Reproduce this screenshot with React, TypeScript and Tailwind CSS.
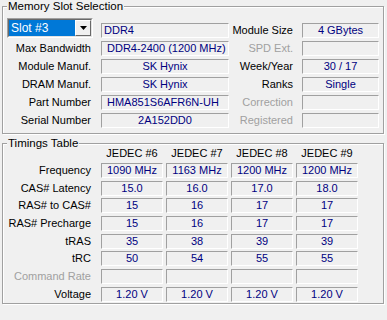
const navy = "text-[#000080]";

type TopRow = {
  label: string;
  value: string;
  left?: boolean;
  rLabel: string;
  rValue: string;
  rDisabled?: boolean;
};

const topRows: TopRow[] = [
  { label: "Max Bandwidth", value: "DDR4-2400 (1200 MHz)", left: true, rLabel: "SPD Ext.", rValue: "", rDisabled: true },
  { label: "Module Manuf.", value: "SK Hynix", rLabel: "Week/Year", rValue: "30 / 17" },
  { label: "DRAM Manuf.", value: "SK Hynix", rLabel: "Ranks", rValue: "Single" },
  { label: "Part Number", value: "HMA851S6AFR6N-UH", left: true, rLabel: "Correction", rValue: "", rDisabled: true },
  { label: "Serial Number", value: "2A152DD0", rLabel: "Registered", rValue: "", rDisabled: true },
];

const timings: { label: string; values: string[]; disabled?: boolean }[] = [
  { label: "Frequency", values: ["1090 MHz", "1163 MHz", "1200 MHz", "1200 MHz"] },
  { label: "CAS# Latency", values: ["15.0", "16.0", "17.0", "18.0"] },
  { label: "RAS# to CAS#", values: ["15", "16", "17", "17"] },
  { label: "RAS# Precharge", values: ["15", "16", "17", "17"] },
  { label: "tRAS", values: ["35", "38", "39", "39"] },
  { label: "tRC", values: ["50", "54", "55", "55"] },
  { label: "Command Rate", values: ["", "", "", ""], disabled: true },
  { label: "Voltage", values: ["1.20 V", "1.20 V", "1.20 V", "1.20 V"] },
];

function Field({ children, className = "" }: { children?: React.ReactNode; className?: string }) {
  return (
    <div
      className={`h-[15px] border border-t-[#a0a0a0] border-l-[#a0a0a0] border-r-white border-b-white leading-[13px] whitespace-nowrap overflow-hidden ${navy} ${className}`}
    >
      {children}
    </div>
  );
}

function Group({ title, className = "", children }: { title: string; className?: string; children: React.ReactNode }) {
  return (
    <div
      className={`relative border border-[#a0a0a0] shadow-[inset_1px_1px_0_#fff,1px_1px_0_#fff] ${className}`}
    >
      <span className="absolute -top-[8px] left-[4px] bg-[#f0f0f0] px-[1px] leading-[14px] text-[11.5px] text-black">
        {title}
      </span>
      {children}
    </div>
  );
}

function SlotCombo() {
  return (
    <div className="ml-[4px] w-[86px] h-[20px] flex border border-t-[#a0a0a0] border-l-[#a0a0a0] border-r-white border-b-white">
      <div className="flex-1 flex bg-white border border-t-[#696969] border-l-[#696969] border-r-[#e3e3e3] border-b-[#e3e3e3]">
        <div className="flex-1 bg-[#0078d7] text-white pl-[2px] leading-[16px] text-[12px]">Slot #3</div>
        <div className="w-[16px] flex items-center justify-center bg-[#f0f0f0] border border-t-white border-l-white border-r-[#696969] border-b-[#696969]">
          <svg width="7" height="4" viewBox="0 0 7 4">
            <path d="M0 0H7L3.5 4Z" fill="#000" />
          </svg>
        </div>
      </div>
    </div>
  );
}

export default function App() {
  return (
    <div className="w-[387px] h-[320px] bg-[#f0f0f0] pt-[6px] pl-[2px] pr-[3px] font-['Liberation_Sans',Arial,sans-serif] text-[11px] text-black">
      <Group title="Memory Slot Selection" className="h-[128px] pt-[11px]">
        <div className="flex flex-col gap-[3px]">
          <div className="flex items-end">
            <SlotCombo />
            <Field className="ml-[8px] w-[128px] pl-[2px]">DDR4</Field>
            <div className="w-[66px] pr-[2px] text-right leading-[15px]">Module Size</div>
            <Field className="ml-[7px] w-[77px] text-center">4 GBytes</Field>
          </div>
          {topRows.map((r) => (
            <div key={r.label} className="flex items-center">
              <div className="w-[89px] pr-[1px] text-right leading-[15px]">{r.label}</div>
              <Field className={`ml-[9px] w-[128px] ${r.left ? "pl-[5px]" : "text-center"}`}>{r.value}</Field>
              <div className={`w-[66px] pr-[2px] text-right leading-[15px] ${r.rDisabled ? "text-[#a0a0a0]" : ""}`}>
                {r.rLabel}
              </div>
              <Field className="ml-[7px] w-[77px] text-center">{r.rValue}</Field>
            </div>
          ))}
        </div>
      </Group>

      <Group title="Timings Table" className="mt-[9px] h-[161px] pt-[2px]">
        <div className="flex flex-col">
          <div className="flex h-[14px] leading-[14px]">
            <div className="w-[89px]" />
            <div className="ml-[9px] grid grid-cols-[62px_62px_62px_62px] gap-x-[3px]">
              {["JEDEC #6", "JEDEC #7", "JEDEC #8", "JEDEC #9"].map((h) => (
                <div key={h} className="text-center">{h}</div>
              ))}
            </div>
          </div>
          <div className="mt-[3px] flex flex-col gap-[2.7px]">
            {timings.map((t) => (
              <div key={t.label} className="flex items-center">
                <div className={`w-[89px] pr-[1px] text-right leading-[15px] ${t.disabled ? "text-[#a0a0a0]" : ""}`}>
                  {t.label}
                </div>
                <div className="ml-[9px] grid grid-cols-[62px_62px_62px_62px] gap-x-[3px]">
                  {t.values.map((v, i) => (
                    <Field key={i} className="text-center">{v}</Field>
                  ))}
                </div>
              </div>
            ))}
          </div>
        </div>
      </Group>
    </div>
  );
}
